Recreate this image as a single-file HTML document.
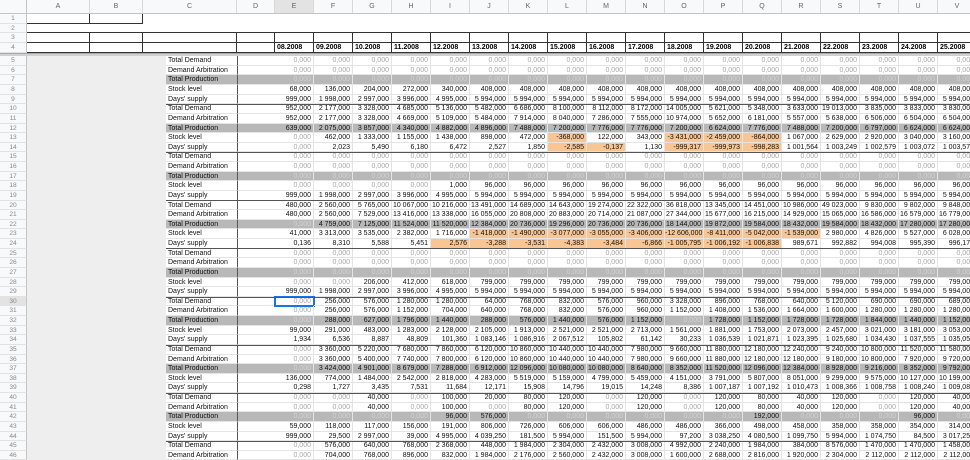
<!DOCTYPE html>
<html><head><meta charset="utf-8">
<style>
*{box-sizing:border-box;margin:0;padding:0}
body{width:970px;height:455px;overflow:hidden;background:#fff;position:relative;font-family:"Liberation Sans",Arial,sans-serif}
.r{position:absolute;left:0;width:990px;height:9.625px;display:flex;font-size:7px;line-height:9.4px;color:#111;white-space:nowrap}
.h{width:27px;flex:none;background:#f8f9fa;color:#888;text-align:center;border-right:1px solid #c4c4c4;border-bottom:1px solid #e2e2e2;font-size:6.6px}
.a{width:139px;flex:none;background:#eeeeee}
.l{width:71px;flex:none;padding-left:2px;border-bottom:1px solid #e4e4e4}
.d{width:38px;flex:none;border-left:1px solid #555;border-bottom:1px solid #e4e4e4}
i{font-style:normal;width:39px;flex:none;text-align:right;padding-right:2px;border-right:1px solid #e4e4e4;border-bottom:1px solid #e4e4e4;overflow:hidden}
i.z{color:#a8a8a8}
i.o{background:#f9c592}
.gr .l,.gr .d,.gr i{background:#b8b8b8}
.gr i.z{color:#d2d2d2}
.sel{outline:2px solid #1a73e8;outline-offset:-1px}
.gl{position:absolute;left:166px;width:824px;height:1px;background:#555}
.hd{position:absolute;top:0;left:0;width:990px;height:14px;display:flex;background:#f8f9fa;border-bottom:1px solid #c4c4c4;font-size:7px;color:#666;line-height:14px}
.hd span{text-align:center;border-right:1px solid #d8d8d8;flex:none}
.top{position:absolute;left:0;width:990px;display:flex;height:9.6px;font-size:7px;line-height:9.4px}
.top span{flex:none;border-right:1px solid #333;border-bottom:1px solid #333}
.top b{flex:none;width:39px;border-right:1px solid #333;border-bottom:1px solid #333;font-weight:bold;padding-left:2px;font-size:7px}
</style></head><body>

<div class="hd"><span style="width:27px;border-right:1px solid #c4c4c4"></span><span style="width:63px">A</span><span style="width:53px">B</span><span style="width:94px">C</span><span style="width:38px">D</span><span style="width:39px;background:#e3e3e3">E</span><span style="width:39px">F</span><span style="width:39px">G</span><span style="width:39px">H</span><span style="width:39px">I</span><span style="width:39px">J</span><span style="width:39px">K</span><span style="width:39px">L</span><span style="width:39px">M</span><span style="width:39px">N</span><span style="width:39px">O</span><span style="width:39px">P</span><span style="width:39px">Q</span><span style="width:39px">R</span><span style="width:39px">S</span><span style="width:39px">T</span><span style="width:39px">U</span><span style="width:39px">V</span></div>

<div class="top" style="top:14.2px"><div class="h" style="height:9.6px">1</div><span style="width:63px"></span><span style="width:53px"></span><span style="width:0;border:none"></span></div>
<div class="top" style="top:23.8px"><div class="h" style="height:9.6px">2</div><span style="width:960px;border-right:none"></span></div>
<div class="top" style="top:33.4px"><div class="h" style="height:9.6px">3</div><span style="width:63px"></span><span style="width:53px"></span><span style="width:94px"></span><span style="width:38px"></span><b></b><b></b><b></b><b></b><b></b><b></b><b></b><b></b><b></b><b></b><b></b><b></b><b></b><b></b><b></b><b></b><b></b><b></b></div>
<div class="top" style="top:43px"><div class="h" style="height:9.6px">4</div><span style="width:63px"></span><span style="width:53px"></span><span style="width:94px"></span><span style="width:38px"></span><b>08.2008</b><b>09.2008</b><b>10.2008</b><b>11.2008</b><b>12.2008</b><b>13.2008</b><b>14.2008</b><b>15.2008</b><b>16.2008</b><b>17.2008</b><b>18.2008</b><b>19.2008</b><b>20.2008</b><b>21.2008</b><b>22.2008</b><b>23.2008</b><b>24.2008</b><b>25.2008</b></div>
<div style="position:absolute;top:52.6px;left:0;width:990px;height:3.4px;background:#d0d0d0;border-top:1px solid #aaa"></div>

<div class="r" style="top:56.2px"><div class="h">5</div><div class="a"></div><div class="l">Total Demand</div><div class="d"></div><i class=z>0,000</i><i class=z>0,000</i><i class=z>0,000</i><i class=z>0,000</i><i class=z>0,000</i><i class=z>0,000</i><i class=z>0,000</i><i class=z>0,000</i><i class=z>0,000</i><i class=z>0,000</i><i class=z>0,000</i><i class=z>0,000</i><i class=z>0,000</i><i class=z>0,000</i><i class=z>0,000</i><i class=z>0,000</i><i class=z>0,000</i><i class=z>0,000</i></div>
<div class="r" style="top:65.8px"><div class="h">6</div><div class="a"></div><div class="l">Demand Arbitration</div><div class="d"></div><i class=z>0,000</i><i class=z>0,000</i><i class=z>0,000</i><i class=z>0,000</i><i class=z>0,000</i><i class=z>0,000</i><i class=z>0,000</i><i class=z>0,000</i><i class=z>0,000</i><i class=z>0,000</i><i class=z>0,000</i><i class=z>0,000</i><i class=z>0,000</i><i class=z>0,000</i><i class=z>0,000</i><i class=z>0,000</i><i class=z>0,000</i><i class=z>0,000</i></div>
<div class="r gr" style="top:75.45px"><div class="h">7</div><div class="a"></div><div class="l">Total Production</div><div class="d"></div><i class=z>0,000</i><i class=z>0,000</i><i class=z>0,000</i><i class=z>0,000</i><i class=z>0,000</i><i class=z>0,000</i><i class=z>0,000</i><i class=z>0,000</i><i class=z>0,000</i><i class=z>0,000</i><i class=z>0,000</i><i class=z>0,000</i><i class=z>0,000</i><i class=z>0,000</i><i class=z>0,000</i><i class=z>0,000</i><i class=z>0,000</i><i class=z>0,000</i></div>
<div class="r" style="top:85.1px"><div class="h">8</div><div class="a"></div><div class="l">Stock level</div><div class="d"></div><i>68,000</i><i>136,000</i><i>204,000</i><i>272,000</i><i>340,000</i><i>408,000</i><i>408,000</i><i>408,000</i><i>408,000</i><i>408,000</i><i>408,000</i><i>408,000</i><i>408,000</i><i>408,000</i><i>408,000</i><i>408,000</i><i>408,000</i><i>408,000</i></div>
<div class="r" style="top:94.7px"><div class="h">9</div><div class="a"></div><div class="l">Days' supply</div><div class="d"></div><i>999,000</i><i>1 998,000</i><i>2 997,000</i><i>3 996,000</i><i>4 995,000</i><i>5 994,000</i><i>5 994,000</i><i>5 994,000</i><i>5 994,000</i><i>5 994,000</i><i>5 994,000</i><i>5 994,000</i><i>5 994,000</i><i>5 994,000</i><i>5 994,000</i><i>5 994,000</i><i>5 994,000</i><i>5 994,000</i></div>
<div class="r" style="top:104.3px"><div class="h">10</div><div class="a"></div><div class="l">Total Demand</div><div class="d"></div><i>952,000</i><i>2 177,000</i><i>3 328,000</i><i>4 685,000</i><i>5 136,000</i><i>5 482,000</i><i>6 686,000</i><i>8 100,000</i><i>8 112,000</i><i>8 172,000</i><i>14 005,000</i><i>5 621,000</i><i>5 348,000</i><i>3 633,000</i><i>19 013,000</i><i>3 835,000</i><i>3 833,000</i><i>3 830,000</i></div>
<div class="r" style="top:113.95px"><div class="h">11</div><div class="a"></div><div class="l">Demand Arbitration</div><div class="d"></div><i>952,000</i><i>2 177,000</i><i>3 328,000</i><i>4 669,000</i><i>5 109,000</i><i>5 484,000</i><i>7 914,000</i><i>8 040,000</i><i>7 286,000</i><i>7 555,000</i><i>10 974,000</i><i>5 652,000</i><i>6 181,000</i><i>5 557,000</i><i>5 638,000</i><i>6 506,000</i><i>6 504,000</i><i>6 504,000</i></div>
<div class="r gr" style="top:123.6px"><div class="h">12</div><div class="a"></div><div class="l">Total Production</div><div class="d"></div><i>639,000</i><i>2 075,000</i><i>3 857,000</i><i>4 340,000</i><i>4 882,000</i><i>4 896,000</i><i>7 488,000</i><i>7 200,000</i><i>7 776,000</i><i>7 776,000</i><i>7 200,000</i><i>6 624,000</i><i>7 776,000</i><i>7 488,000</i><i>7 200,000</i><i>6 797,000</i><i>6 624,000</i><i>6 624,000</i></div>
<div class="r" style="top:133.2px"><div class="h">13</div><div class="a"></div><div class="l">Stock level</div><div class="d"></div><i class=z>0,000</i><i>462,000</i><i>1 333,000</i><i>1 155,000</i><i>1 438,000</i><i>898,000</i><i>472,000</i><i class=o>-368,000</i><i>122,000</i><i>343,000</i><i class=o>-3 431,000</i><i class=o>-2 459,000</i><i class=o>-864,000</i><i>1 067,000</i><i>2 629,000</i><i>2 920,000</i><i>3 040,000</i><i>3 160,000</i></div>
<div class="r" style="top:142.8px"><div class="h">14</div><div class="a"></div><div class="l">Days' supply</div><div class="d"></div><i class=z>0,000</i><i>2,023</i><i>5,490</i><i>6,180</i><i>6,472</i><i>2,527</i><i>1,850</i><i class=o>-2,585</i><i class=o>-0,137</i><i>1,130</i><i class=o>-999,317</i><i class=o>-999,973</i><i class=o>-998,283</i><i>1 001,564</i><i>1 003,249</i><i>1 002,579</i><i>1 003,072</i><i>1 003,579</i></div>
<div class="r" style="top:152.45px"><div class="h">15</div><div class="a"></div><div class="l">Total Demand</div><div class="d"></div><i class=z>0,000</i><i class=z>0,000</i><i class=z>0,000</i><i class=z>0,000</i><i class=z>0,000</i><i class=z>0,000</i><i class=z>0,000</i><i class=z>0,000</i><i class=z>0,000</i><i class=z>0,000</i><i class=z>0,000</i><i class=z>0,000</i><i class=z>0,000</i><i class=z>0,000</i><i class=z>0,000</i><i class=z>0,000</i><i class=z>0,000</i><i class=z>0,000</i></div>
<div class="r" style="top:162.1px"><div class="h">16</div><div class="a"></div><div class="l">Demand Arbitration</div><div class="d"></div><i class=z>0,000</i><i class=z>0,000</i><i class=z>0,000</i><i class=z>0,000</i><i class=z>0,000</i><i class=z>0,000</i><i class=z>0,000</i><i class=z>0,000</i><i class=z>0,000</i><i class=z>0,000</i><i class=z>0,000</i><i class=z>0,000</i><i class=z>0,000</i><i class=z>0,000</i><i class=z>0,000</i><i class=z>0,000</i><i class=z>0,000</i><i class=z>0,000</i></div>
<div class="r gr" style="top:171.7px"><div class="h">17</div><div class="a"></div><div class="l">Total Production</div><div class="d"></div><i class=z>0,000</i><i class=z>0,000</i><i class=z>0,000</i><i class=z>0,000</i><i class=z>0,000</i><i class=z>0,000</i><i class=z>0,000</i><i class=z>0,000</i><i class=z>0,000</i><i class=z>0,000</i><i class=z>0,000</i><i class=z>0,000</i><i class=z>0,000</i><i class=z>0,000</i><i class=z>0,000</i><i class=z>0,000</i><i class=z>0,000</i><i class=z>0,000</i></div>
<div class="r" style="top:181.3px"><div class="h">18</div><div class="a"></div><div class="l">Stock level</div><div class="d"></div><i class=z>0,000</i><i class=z>0,000</i><i class=z>0,000</i><i class=z>0,000</i><i>1,000</i><i>96,000</i><i>96,000</i><i>96,000</i><i>96,000</i><i>96,000</i><i>96,000</i><i>96,000</i><i>96,000</i><i>96,000</i><i>96,000</i><i>96,000</i><i>96,000</i><i>96,000</i></div>
<div class="r" style="top:190.95px"><div class="h">19</div><div class="a"></div><div class="l">Days' supply</div><div class="d"></div><i>999,000</i><i>1 998,000</i><i>2 997,000</i><i>3 996,000</i><i>4 995,000</i><i>5 994,000</i><i>5 994,000</i><i>5 994,000</i><i>5 994,000</i><i>5 994,000</i><i>5 994,000</i><i>5 994,000</i><i>5 994,000</i><i>5 994,000</i><i>5 994,000</i><i>5 994,000</i><i>5 994,000</i><i>5 994,000</i></div>
<div class="r" style="top:200.6px"><div class="h">20</div><div class="a"></div><div class="l">Total Demand</div><div class="d"></div><i>480,000</i><i>2 560,000</i><i>5 765,000</i><i>10 067,000</i><i>10 216,000</i><i>13 491,000</i><i>14 689,000</i><i>14 643,000</i><i>19 274,000</i><i>22 322,000</i><i>36 818,000</i><i>13 345,000</i><i>14 451,000</i><i>10 986,000</i><i>49 023,000</i><i>9 830,000</i><i>9 802,000</i><i>9 848,000</i></div>
<div class="r" style="top:210.2px"><div class="h">21</div><div class="a"></div><div class="l">Demand Arbitration</div><div class="d"></div><i>480,000</i><i>2 560,000</i><i>7 529,000</i><i>13 416,000</i><i>13 338,000</i><i>16 055,000</i><i>20 808,000</i><i>20 883,000</i><i>20 714,000</i><i>21 087,000</i><i>27 344,000</i><i>15 677,000</i><i>16 215,000</i><i>14 929,000</i><i>15 065,000</i><i>16 586,000</i><i>16 579,000</i><i>16 779,000</i></div>
<div class="r gr" style="top:219.8px"><div class="h">22</div><div class="a"></div><div class="l">Total Production</div><div class="d"></div><i class=z>0,000</i><i>4 759,000</i><i>7 125,000</i><i>11 524,000</i><i>11 520,000</i><i>12 384,000</i><i>20 736,000</i><i>19 296,000</i><i>20 736,000</i><i>20 736,000</i><i>18 144,000</i><i>19 872,000</i><i>19 584,000</i><i>18 432,000</i><i>19 584,000</i><i>18 432,000</i><i>17 280,000</i><i>17 280,000</i></div>
<div class="r" style="top:229.45px"><div class="h">23</div><div class="a"></div><div class="l">Stock level</div><div class="d"></div><i>41,000</i><i>3 313,000</i><i>3 535,000</i><i>2 382,000</i><i>1 716,000</i><i class=o>-1 418,000</i><i class=o>-1 490,000</i><i class=o>-3 077,000</i><i class=o>-3 055,000</i><i class=o>-3 406,000</i><i class=o>-12 606,000</i><i class=o>-8 411,000</i><i class=o>-5 042,000</i><i class=o>-1 539,000</i><i>2 980,000</i><i>4 826,000</i><i>5 527,000</i><i>6 028,000</i></div>
<div class="r" style="top:239.1px"><div class="h">24</div><div class="a"></div><div class="l">Days' supply</div><div class="d"></div><i>0,136</i><i>8,310</i><i>5,588</i><i>5,451</i><i class=o>2,576</i><i class=o>-3,288</i><i class=o>-3,531</i><i class=o>-4,383</i><i class=o>-3,484</i><i class=o>-6,866</i><i class=o>-1 005,795</i><i class=o>-1 006,192</i><i class=o>-1 006,838</i><i>989,671</i><i>992,882</i><i>994,008</i><i>995,390</i><i>996,173</i></div>
<div class="r" style="top:248.7px"><div class="h">25</div><div class="a"></div><div class="l">Total Demand</div><div class="d"></div><i class=z>0,000</i><i class=z>0,000</i><i class=z>0,000</i><i class=z>0,000</i><i class=z>0,000</i><i class=z>0,000</i><i class=z>0,000</i><i class=z>0,000</i><i class=z>0,000</i><i class=z>0,000</i><i class=z>0,000</i><i class=z>0,000</i><i class=z>0,000</i><i class=z>0,000</i><i class=z>0,000</i><i class=z>0,000</i><i class=z>0,000</i><i class=z>0,000</i></div>
<div class="r" style="top:258.3px"><div class="h">26</div><div class="a"></div><div class="l">Demand Arbitration</div><div class="d"></div><i class=z>0,000</i><i class=z>0,000</i><i class=z>0,000</i><i class=z>0,000</i><i class=z>0,000</i><i class=z>0,000</i><i class=z>0,000</i><i class=z>0,000</i><i class=z>0,000</i><i class=z>0,000</i><i class=z>0,000</i><i class=z>0,000</i><i class=z>0,000</i><i class=z>0,000</i><i class=z>0,000</i><i class=z>0,000</i><i class=z>0,000</i><i class=z>0,000</i></div>
<div class="r gr" style="top:267.95px"><div class="h">27</div><div class="a"></div><div class="l">Total Production</div><div class="d"></div><i class=z>0,000</i><i class=z>0,000</i><i class=z>0,000</i><i class=z>0,000</i><i class=z>0,000</i><i class=z>0,000</i><i class=z>0,000</i><i class=z>0,000</i><i class=z>0,000</i><i class=z>0,000</i><i class=z>0,000</i><i class=z>0,000</i><i class=z>0,000</i><i class=z>0,000</i><i class=z>0,000</i><i class=z>0,000</i><i class=z>0,000</i><i class=z>0,000</i></div>
<div class="r" style="top:277.6px"><div class="h">28</div><div class="a"></div><div class="l">Stock level</div><div class="d"></div><i class=z>0,000</i><i class=z>0,000</i><i>206,000</i><i>412,000</i><i>618,000</i><i>799,000</i><i>799,000</i><i>799,000</i><i>799,000</i><i>799,000</i><i>799,000</i><i>799,000</i><i>799,000</i><i>799,000</i><i>799,000</i><i>799,000</i><i>799,000</i><i>799,000</i></div>
<div class="r" style="top:287.2px"><div class="h">29</div><div class="a"></div><div class="l">Days' supply</div><div class="d"></div><i>999,000</i><i>1 998,000</i><i>2 997,000</i><i>3 996,000</i><i>4 995,000</i><i>5 994,000</i><i>5 994,000</i><i>5 994,000</i><i>5 994,000</i><i>5 994,000</i><i>5 994,000</i><i>5 994,000</i><i>5 994,000</i><i>5 994,000</i><i>5 994,000</i><i>5 994,000</i><i>5 994,000</i><i>5 994,000</i></div>
<div class="r" style="top:296.8px"><div class="h" style="background:#e3e3e3">30</div><div class="a"></div><div class="l">Total Demand</div><div class="d"></div><i class="z sel">0,000</i><i>256,000</i><i>576,000</i><i>1 280,000</i><i>1 280,000</i><i>64,000</i><i>768,000</i><i>832,000</i><i>576,000</i><i>960,000</i><i>3 328,000</i><i>896,000</i><i>768,000</i><i>640,000</i><i>5 120,000</i><i>690,000</i><i>690,000</i><i>689,000</i></div>
<div class="r" style="top:306.45px"><div class="h">31</div><div class="a"></div><div class="l">Demand Arbitration</div><div class="d"></div><i class=z>0,000</i><i>256,000</i><i>576,000</i><i>1 152,000</i><i>704,000</i><i>640,000</i><i>768,000</i><i>832,000</i><i>576,000</i><i>960,000</i><i>1 152,000</i><i>1 408,000</i><i>1 536,000</i><i>1 664,000</i><i>1 600,000</i><i>1 280,000</i><i>1 280,000</i><i>1 280,000</i></div>
<div class="r gr" style="top:316.1px"><div class="h">32</div><div class="a"></div><div class="l">Total Production</div><div class="d"></div><i class=z>0,000</i><i>288,000</i><i>627,000</i><i>1 796,000</i><i>1 440,000</i><i>288,000</i><i>576,000</i><i>1 440,000</i><i>576,000</i><i>1 152,000</i><i class=z>0,000</i><i>1 728,000</i><i>1 152,000</i><i>1 728,000</i><i>1 728,000</i><i>1 844,000</i><i>1 440,000</i><i>1 152,000</i></div>
<div class="r" style="top:325.7px"><div class="h">33</div><div class="a"></div><div class="l">Stock level</div><div class="d"></div><i>99,000</i><i>291,000</i><i>483,000</i><i>1 283,000</i><i>2 128,000</i><i>2 105,000</i><i>1 913,000</i><i>2 521,000</i><i>2 521,000</i><i>2 713,000</i><i>1 561,000</i><i>1 881,000</i><i>1 753,000</i><i>2 073,000</i><i>2 457,000</i><i>3 021,000</i><i>3 181,000</i><i>3 053,000</i></div>
<div class="r" style="top:335.3px"><div class="h">34</div><div class="a"></div><div class="l">Days' supply</div><div class="d"></div><i>1,934</i><i>6,536</i><i>8,887</i><i>48,809</i><i>101,360</i><i>1 083,146</i><i>1 086,916</i><i>2 067,512</i><i>105,802</i><i>61,142</i><i>30,233</i><i>1 036,539</i><i>1 021,871</i><i>1 023,395</i><i>1 025,680</i><i>1 034,430</i><i>1 037,555</i><i>1 035,050</i></div>
<div class="r" style="top:344.95px"><div class="h">35</div><div class="a"></div><div class="l">Total Demand</div><div class="d"></div><i class=z>0,000</i><i>3 360,000</i><i>5 220,000</i><i>7 680,000</i><i>7 860,000</i><i>6 120,000</i><i>10 860,000</i><i>10 440,000</i><i>10 440,000</i><i>7 980,000</i><i>9 660,000</i><i>11 880,000</i><i>12 180,000</i><i>12 240,000</i><i>9 240,000</i><i>10 800,000</i><i>11 520,000</i><i>11 580,000</i></div>
<div class="r" style="top:354.6px"><div class="h">36</div><div class="a"></div><div class="l">Demand Arbitration</div><div class="d"></div><i class=z>0,000</i><i>3 360,000</i><i>5 400,000</i><i>7 740,000</i><i>7 800,000</i><i>6 120,000</i><i>10 860,000</i><i>10 440,000</i><i>10 440,000</i><i>7 980,000</i><i>9 660,000</i><i>11 880,000</i><i>12 180,000</i><i>12 180,000</i><i>9 180,000</i><i>10 800,000</i><i>7 920,000</i><i>9 720,000</i></div>
<div class="r gr" style="top:364.2px"><div class="h">37</div><div class="a"></div><div class="l">Total Production</div><div class="d"></div><i class=z>0,000</i><i>3 424,000</i><i>4 901,000</i><i>8 679,000</i><i>7 288,000</i><i>6 912,000</i><i>12 096,000</i><i>10 080,000</i><i>10 080,000</i><i>8 640,000</i><i>8 352,000</i><i>11 520,000</i><i>12 096,000</i><i>12 384,000</i><i>8 928,000</i><i>9 216,000</i><i>8 352,000</i><i>9 792,000</i></div>
<div class="r" style="top:373.8px"><div class="h">38</div><div class="a"></div><div class="l">Stock level</div><div class="d"></div><i>136,000</i><i>774,000</i><i>1 484,000</i><i>2 542,000</i><i>2 818,000</i><i>4 283,000</i><i>5 519,000</i><i>5 159,000</i><i>4 799,000</i><i>5 459,000</i><i>4 151,000</i><i>3 791,000</i><i>5 807,000</i><i>8 051,000</i><i>9 299,000</i><i>9 575,000</i><i>10 127,000</i><i>10 199,000</i></div>
<div class="r" style="top:383.45px"><div class="h">39</div><div class="a"></div><div class="l">Days' supply</div><div class="d"></div><i>0,298</i><i>1,727</i><i>3,435</i><i>7,531</i><i>11,684</i><i>12,171</i><i>15,908</i><i>14,796</i><i>19,015</i><i>14,248</i><i>8,386</i><i>1 007,187</i><i>1 007,192</i><i>1 010,473</i><i>1 008,366</i><i>1 008,758</i><i>1 008,240</i><i>1 009,080</i></div>
<div class="r" style="top:393.1px"><div class="h">40</div><div class="a"></div><div class="l">Total Demand</div><div class="d"></div><i class=z>0,000</i><i class=z>0,000</i><i>40,000</i><i class=z>0,000</i><i>100,000</i><i>20,000</i><i>80,000</i><i>120,000</i><i class=z>0,000</i><i>120,000</i><i class=z>0,000</i><i>120,000</i><i>80,000</i><i>40,000</i><i>120,000</i><i class=z>0,000</i><i>120,000</i><i>40,000</i></div>
<div class="r" style="top:402.7px"><div class="h">41</div><div class="a"></div><div class="l">Demand Arbitration</div><div class="d"></div><i class=z>0,000</i><i class=z>0,000</i><i>40,000</i><i class=z>0,000</i><i>100,000</i><i class=z>0,000</i><i>80,000</i><i>120,000</i><i class=z>0,000</i><i>120,000</i><i class=z>0,000</i><i>120,000</i><i>80,000</i><i>40,000</i><i>120,000</i><i class=z>0,000</i><i>120,000</i><i>40,000</i></div>
<div class="r gr" style="top:412.3px"><div class="h">42</div><div class="a"></div><div class="l">Total Production</div><div class="d"></div><i class=z>0,000</i><i class=z>0,000</i><i class=z>0,000</i><i class=z>0,000</i><i>96,000</i><i>576,000</i><i class=z>0,000</i><i class=z>0,000</i><i class=z>0,000</i><i class=z>0,000</i><i class=z>0,000</i><i class=z>0,000</i><i>192,000</i><i class=z>0,000</i><i class=z>0,000</i><i class=z>0,000</i><i>96,000</i><i class=z>0,000</i></div>
<div class="r" style="top:421.95px"><div class="h">43</div><div class="a"></div><div class="l">Stock level</div><div class="d"></div><i>59,000</i><i>118,000</i><i>117,000</i><i>156,000</i><i>191,000</i><i>806,000</i><i>726,000</i><i>606,000</i><i>606,000</i><i>486,000</i><i>486,000</i><i>366,000</i><i>498,000</i><i>458,000</i><i>358,000</i><i>358,000</i><i>354,000</i><i>314,000</i></div>
<div class="r" style="top:431.6px"><div class="h">44</div><div class="a"></div><div class="l">Days' supply</div><div class="d"></div><i>999,000</i><i>29,500</i><i>2 997,000</i><i>39,000</i><i>4 995,000</i><i>4 039,250</i><i>181,500</i><i>5 994,000</i><i>151,500</i><i>5 994,000</i><i>97,200</i><i>3 038,250</i><i>4 080,500</i><i>1 099,750</i><i>5 994,000</i><i>1 074,750</i><i>84,500</i><i>3 017,250</i></div>
<div class="r" style="top:441.2px"><div class="h">45</div><div class="a"></div><div class="l">Total Demand</div><div class="d"></div><i class=z>0,000</i><i>576,000</i><i>640,000</i><i>768,000</i><i>2 368,000</i><i>448,000</i><i>1 984,000</i><i>2 304,000</i><i>2 432,000</i><i>3 008,000</i><i>4 992,000</i><i>2 240,000</i><i>1 984,000</i><i>384,000</i><i>8 576,000</i><i>1 470,000</i><i>1 470,000</i><i>1 458,000</i></div>
<div class="r" style="top:450.8px"><div class="h">46</div><div class="a"></div><div class="l">Demand Arbitration</div><div class="d"></div><i class=z>0,000</i><i>704,000</i><i>768,000</i><i>896,000</i><i>832,000</i><i>1 984,000</i><i>2 176,000</i><i>2 560,000</i><i>2 432,000</i><i>3 008,000</i><i>1 600,000</i><i>2 688,000</i><i>2 816,000</i><i>1 920,000</i><i>2 304,000</i><i>2 112,000</i><i>2 112,000</i><i>2 112,000</i></div>

<div class="gl" style="top:104px"></div>
<div class="gl" style="top:152.1px"></div>
<div class="gl" style="top:200.3px"></div>
<div class="gl" style="top:248.4px"></div>
<div class="gl" style="top:296.5px"></div>
<div class="gl" style="top:344.6px"></div>
<div class="gl" style="top:392.8px"></div>
<div class="gl" style="top:440.9px"></div>
</body></html>
